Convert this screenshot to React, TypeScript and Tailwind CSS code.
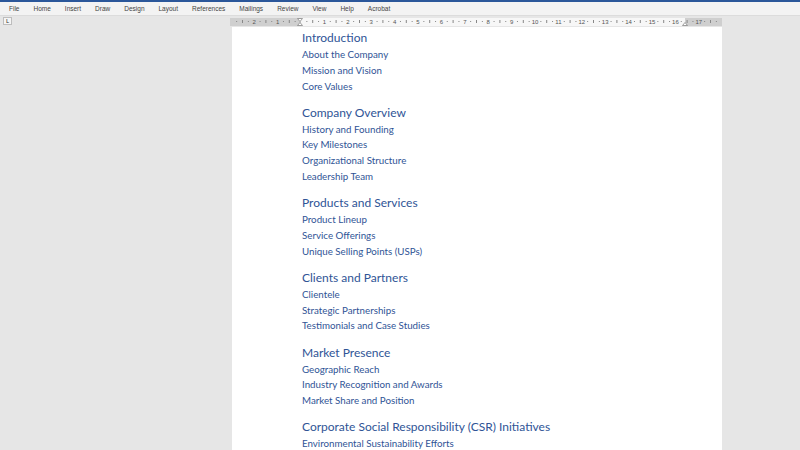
const menu = ['File', 'Home', 'Insert', 'Draw', 'Design', 'Layout', 'References', 'Mailings', 'Review', 'View', 'Help', 'Acrobat'];

const sections = [
  { title: 'Introduction', items: ['About the Company', 'Mission and Vision', 'Core Values'] },
  { title: 'Company Overview', items: ['History and Founding', 'Key Milestones', 'Organizational Structure', 'Leadership Team'] },
  { title: 'Products and Services', items: ['Product Lineup', 'Service Offerings', 'Unique Selling Points (USPs)'] },
  { title: 'Clients and Partners', items: ['Clientele', 'Strategic Partnerships', 'Testimonials and Case Studies'] },
  { title: 'Market Presence', items: ['Geographic Reach', 'Industry Recognition and Awards', 'Market Share and Position'] },
  { title: 'Corporate Social Responsibility (CSR) Initiatives', items: ['Environmental Sustainability Efforts'] },
];

// ruler geometry, in ruler-local px (ruler starts at page x=230)
const ZERO = 71;
const CM = 23.4;

function Ruler() {
  const marks: JSX.Element[] = [];
  for (let k = -3; k <= 17; k++) {
    const x = ZERO + k * CM;
    if (k !== 0 && x > 2 && x < 490) {
      marks.push(
        <text key={'n' + k} x={x} y={6} fontSize={6} textAnchor="middle" fill="#555" fontFamily="Liberation Sans, sans-serif">
          {Math.abs(k)}
        </text>
      );
    }
    for (let q = 1; q < 4; q++) {
      const tx = x + (q * CM) / 4;
      if (tx > 1 && tx < 491) {
        marks.push(
          q === 2 ? (
            <rect key={'h' + k + q} x={tx - 0.5} y={2} width={1} height={3} fill="#888" />
          ) : (
            <rect key={'q' + k + q} x={tx - 0.5} y={3} width={1} height={1} fill="#888" />
          )
        );
      }
    }
  }
  return (
    <svg width={492} height={8} viewBox="0 0 492 8" className="block">
      <rect x={0} y={0} width={492} height={8} fill="#cfcfcf" />
      <rect x={ZERO} y={0} width={455 - ZERO} height={8} fill="#f7f7f7" />
      {marks}
      {/* indent markers */}
      <path d="M67.5 0.5 h5 l-2.5 3 z" fill="#fff" stroke="#888" strokeWidth={0.8} />
      <path d="M67.5 7.5 h5 l-2.5 -3 z" fill="#fff" stroke="#888" strokeWidth={0.8} />
      <path d="M452.5 7.5 h5 l-2.5 -3 z" fill="#fff" stroke="#888" strokeWidth={0.8} />
    </svg>
  );
}

export default function App() {
  return (
    <div
      className="w-[800px] h-[450px] overflow-hidden bg-[#e6e6e6] flex flex-col"
      style={{ fontFamily: 'Lato, "Open Sans", "Liberation Sans", sans-serif' }}
    >
      <div className="h-[2px] shrink-0 bg-[#2b579a]" />
      <div
        className="h-[14px] shrink-0 bg-[#f3f3f3] border-b border-[#dcdcdc] flex items-center pt-[1px] pl-[9px] gap-[14px] text-[6.5px] text-[#444]"
        style={{ fontFamily: '"Liberation Sans", sans-serif' }}
      >
        {menu.map((m) => (
          <span key={m} className="leading-none">{m}</span>
        ))}
      </div>
      <div className="flex shrink-0 items-start mt-[1px] h-[10px]">
        <div className="ml-[3px] w-[9px] h-[8px] border border-[#bdbdbd] bg-[#f5f5f5] flex items-center justify-center text-[6px] leading-none text-[#333]">
          L
        </div>
        <div className="ml-[218px] mt-[1px]">
          <Ruler />
        </div>
      </div>
      <div className="ml-[232px] w-[490px] flex-1 shrink-0 bg-white pl-[70px] pt-[2px]">
        {sections.map((s, i) => (
          <div key={s.title} className={i === 0 ? '' : 'pt-[9.3px]'}>
            <div className="h-[18px] leading-[18px] text-[12px] text-[#2f5496] whitespace-nowrap">{s.title}</div>
            {s.items.map((it) => (
              <div key={it} className="h-[15.8px] leading-[15.8px] text-[9.75px] text-[#2f5496] whitespace-nowrap">
                {it}
              </div>
            ))}
          </div>
        ))}
      </div>
    </div>
  );
}
